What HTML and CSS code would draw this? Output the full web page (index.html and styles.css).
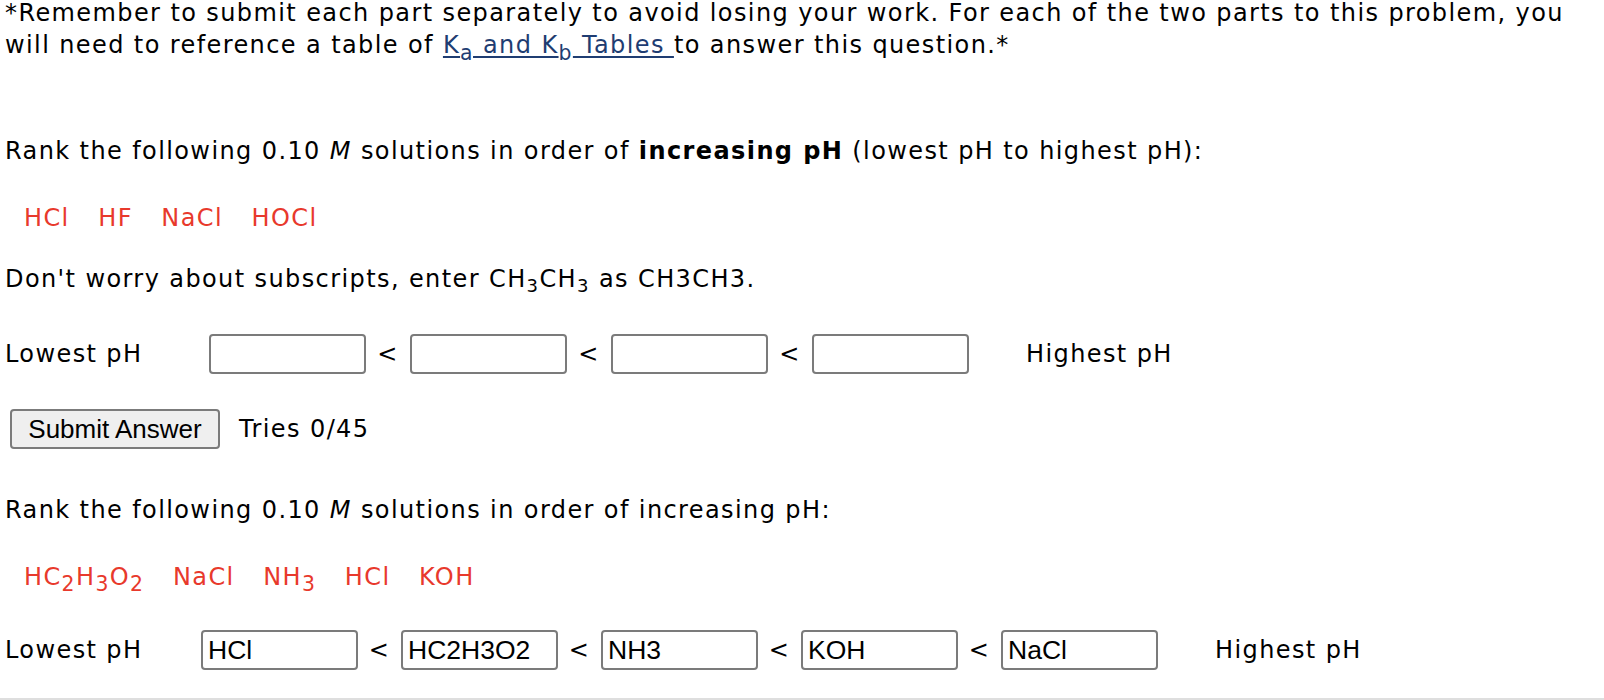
FILE: index.html
```html
<!DOCTYPE html>
<html lang="en">
<head>
    <meta charset="UTF-8">
    <title>Rank by pH</title>
    <link rel="stylesheet" href="styles.css">
</head>
<body>
    <p class="note">*Remember to submit each part separately to avoid losing your work. For each of the two parts to this problem, you will need to reference a table of <a href="#" class="ref-link">K<sub>a</sub> and K<sub>b</sub> Tables </a>to answer this question.*</p>

    <div class="part">
        <p class="prompt">Rank the following 0.10 <i>M</i> solutions in order of <b>increasing pH</b> (lowest pH to highest pH):</p>
        <div class="species">
            <span>HCl</span>
            <span>HF</span>
            <span>NaCl</span>
            <span>HOCl</span>
        </div>
        <p class="hint">Don't worry about subscripts, enter CH<sub>3</sub>CH<sub>3</sub> as CH3CH3.</p>
        <div class="rank-row">
            <span class="end-label">Lowest pH</span>
            <input type="text" class="rank-box">
            <span class="lt">&lt;</span>
            <input type="text" class="rank-box">
            <span class="lt">&lt;</span>
            <input type="text" class="rank-box">
            <span class="lt">&lt;</span>
            <input type="text" class="rank-box">
            <span class="end-label high">Highest pH</span>
        </div>
        <div class="submit-row">
            <button type="button">Submit Answer</button>
            <span class="tries">Tries 0/45</span>
        </div>
    </div>

    <div class="part part-two">
        <p class="prompt">Rank the following 0.10 <i>M</i> solutions in order of increasing pH:</p>
        <div class="species">
            <span>HC<sub>2</sub>H<sub>3</sub>O<sub>2</sub></span>
            <span>NaCl</span>
            <span>NH<sub>3</sub></span>
            <span>HCl</span>
            <span>KOH</span>
        </div>
        <div class="rank-row filled">
            <span class="end-label">Lowest pH</span>
            <input type="text" class="rank-box" value="HCl">
            <span class="lt">&lt;</span>
            <input type="text" class="rank-box" value="HC2H3O2">
            <span class="lt">&lt;</span>
            <input type="text" class="rank-box" value="NH3">
            <span class="lt">&lt;</span>
            <input type="text" class="rank-box" value="KOH">
            <span class="lt">&lt;</span>
            <input type="text" class="rank-box" value="NaCl">
            <span class="end-label high">Highest pH</span>
        </div>
    </div>
    <hr class="divider">
</body>
</html>
```

FILE: styles.css
```css
body {
    margin: 0;
    padding: 0 5px;
    font-family: "DejaVu Sans", Verdana, sans-serif;
    font-size: 24px;
    line-height: 32px;
    letter-spacing: 1.4px;
    color: #000;
    background: #fff;
}
p {
    margin: 0;
}
sub {
    font-size: 0.75em;
    line-height: 0;
    vertical-align: -0.28em;
}
.note {
    max-width: 1560px;
    margin-top: -3px;
}
.ref-link {
    color: #1f3d72;
    text-decoration: underline;
    text-underline-offset: 3px;
}
.ref-link sub {
    font-size: 0.85em;
    vertical-align: -0.32em;
}
.prompt {
    margin-top: 74px;
}
.species {
    display: flex;
    gap: 28.5px;
    margin-top: 35px;
    padding-left: 19px;
    color: #e8392c;
}
.species sub {
    font-size: 0.85em;
    vertical-align: -0.3em;
}
.hint {
    margin-top: 29px;
}
.rank-row {
    display: flex;
    align-items: center;
    margin-top: 39px;
}
.end-label {
    width: 204px;
}
.end-label.high {
    width: auto;
    margin-left: 57px;
}
.rank-box {
    box-sizing: border-box;
    width: 157px;
    height: 40px;
    margin: 0;
    padding: 0 5px;
    border: 2px solid #7b7b7b;
    border-radius: 4px;
    font-family: "Liberation Sans", Arial, sans-serif;
    font-size: 26.5px;
    letter-spacing: 0;
    color: #000;
    background: #fff;
}
.lt {
    width: 44px;
    text-align: center;
}
.submit-row {
    display: flex;
    align-items: center;
    margin-top: 35px;
    padding-left: 5px;
}
button {
    box-sizing: border-box;
    width: 210px;
    height: 40px;
    padding: 0;
    border: 2px solid #7b7b7b;
    border-radius: 4px;
    background: #efefef;
    font-family: "Liberation Sans", Arial, sans-serif;
    font-size: 26px;
    letter-spacing: 0;
    color: #000;
}
.tries {
    margin-left: 19px;
}
.part-two .prompt {
    margin-top: 45px;
}
.filled {
    margin-top: 37px;
}
.filled .end-label {
    width: 196px;
}
.filled .lt {
    width: 43px;
}
.divider {
    margin: 28px -5px 0;
    border: 0;
    border-top: 2px solid #dedede;
}
```
